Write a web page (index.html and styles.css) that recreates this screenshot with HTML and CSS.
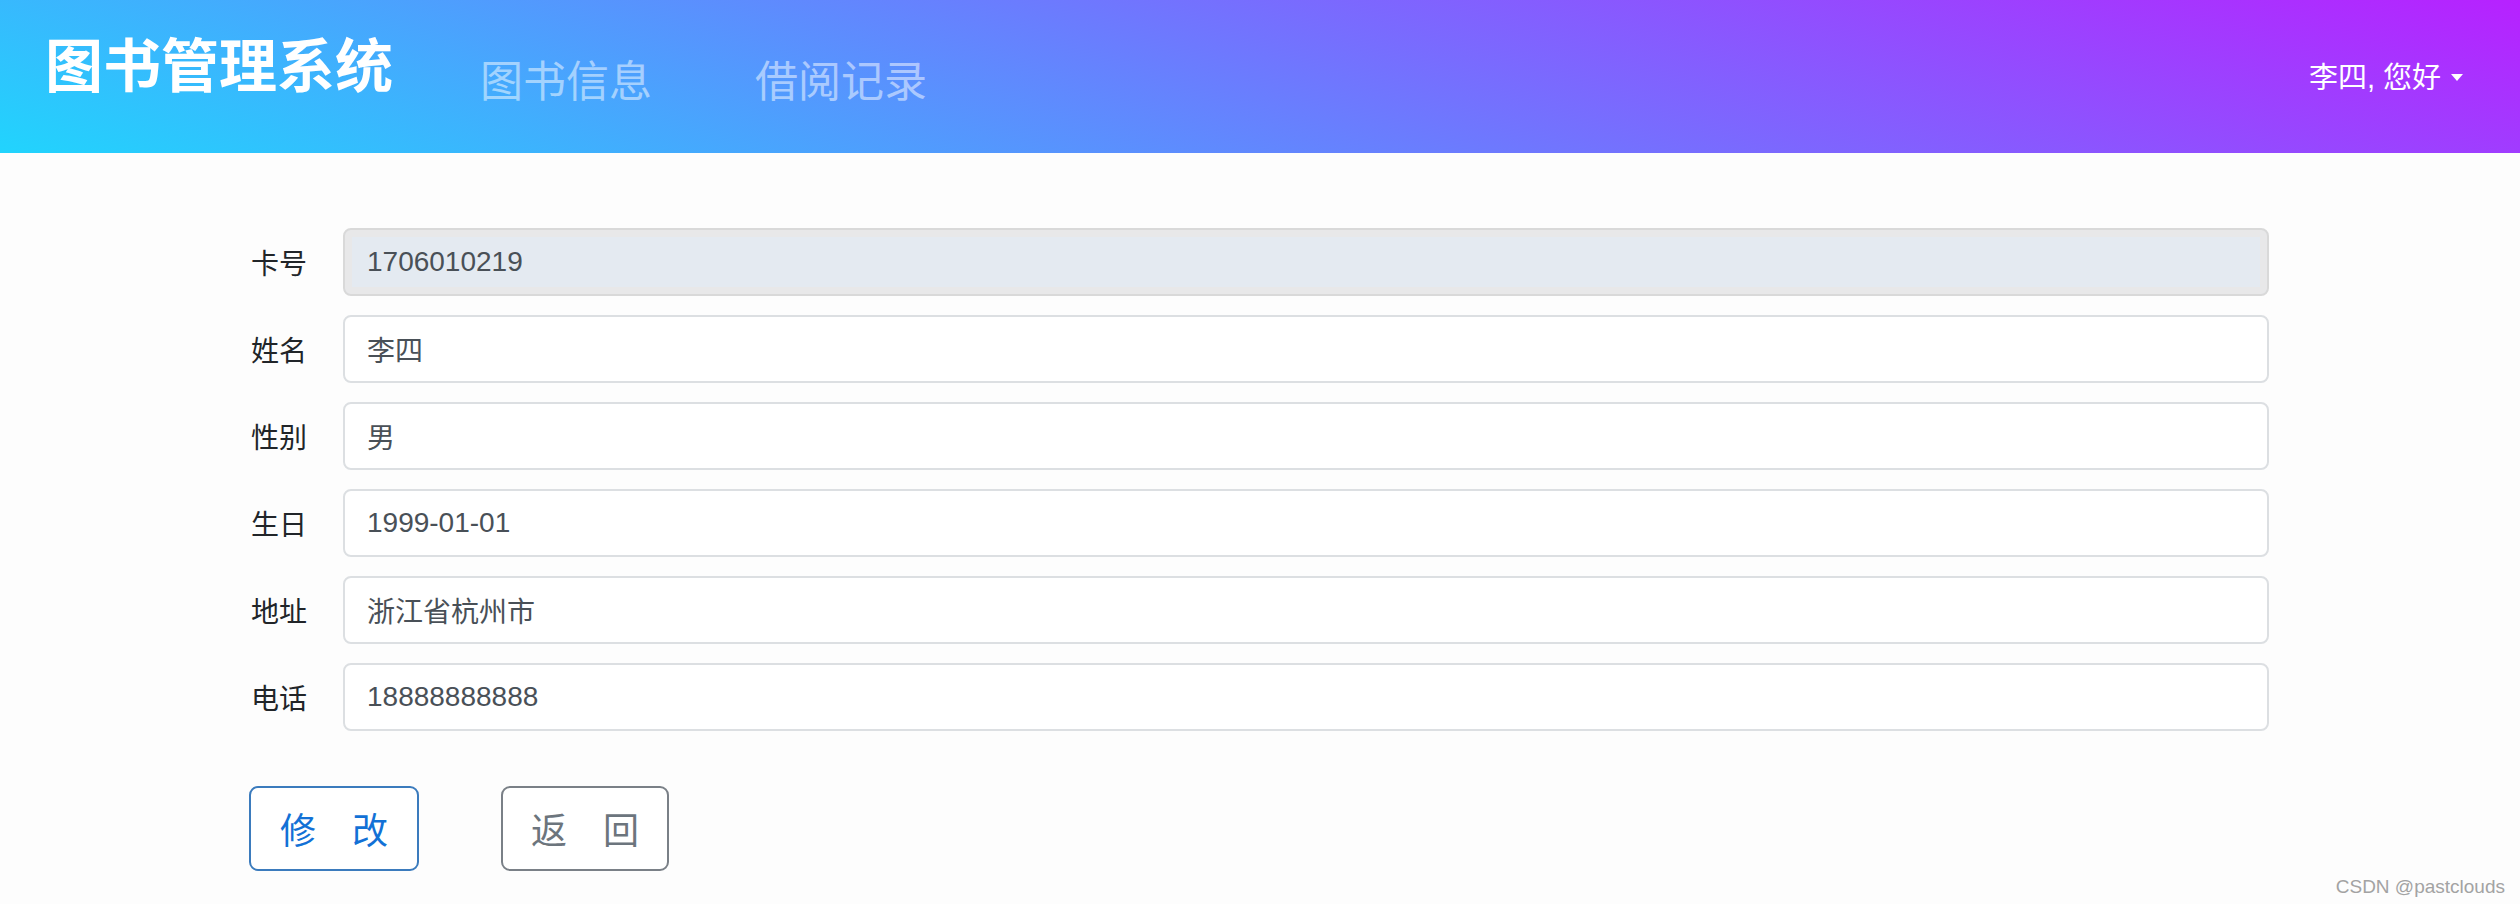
FILE: index.html
```html
<!DOCTYPE html>
<html lang="zh-CN">
<head>
    <meta charset="UTF-8">
    <title>图书管理系统</title>
    <link rel="stylesheet" href="styles.css">
</head>
<body>
    <div class="navbar">
        <a href="javascript:;" class="brand">图书管理系统</a>
        <ul class="nav">
            <li><a href="javascript:;">图书信息</a></li>
            <li><a href="javascript:;">借阅记录</a></li>
        </ul>
        <a href="javascript:;" class="user">李四, 您好<span class="caret"></span></a>
    </div>

    <div class="main">
        <form class="info">
            <div class="row">
                <label>卡号</label>
                <input type="text" class="readonly" value="1706010219" readonly>
            </div>
            <div class="row">
                <label>姓名</label>
                <input type="text" value="李四">
            </div>
            <div class="row">
                <label>性别</label>
                <input type="text" value="男">
            </div>
            <div class="row">
                <label>生日</label>
                <input type="text" value="1999-01-01">
            </div>
            <div class="row">
                <label>地址</label>
                <input type="text" value="浙江省杭州市">
            </div>
            <div class="row">
                <label>电话</label>
                <input type="text" value="18888888888">
            </div>

            <div class="btns">
                <a href="javascript:;" class="btn btn-edit">修　改</a>
                <a href="javascript:;" class="btn btn-back">返　回</a>
            </div>
        </form>
    </div>

    <div class="mark">CSDN @pastclouds</div>
</body>
</html>
```

FILE: styles.css
```css
* {
    margin: 0;
    padding: 0;
    box-sizing: border-box;
}
ul, ol {
    list-style: none;
}
a {
    text-decoration: none;
}
body {
    background: #fdfdfd;
    font-family: "Liberation Sans", "Noto Sans CJK SC", sans-serif;
    color: #212529;
    height: 904px;
    position: relative;
    overflow: hidden;
}

/* 顶部导航 */
.navbar {
    height: 153px;
    display: flex;
    align-items: center;
    padding: 0 57px 0 45px;
    background-image: linear-gradient(19deg, #21d4fd 0%, #b721ff 100%);
}
.brand {
    font-family: "Noto Sans CJK SC", sans-serif;
    font-size: 58px;
    font-weight: 700;
    line-height: 80px;
    color: #fff;
    margin-bottom: 30px;
}
.nav {
    display: flex;
    gap: 103px;
    margin-left: 87px;
}
.nav a {
    font-family: "Noto Sans CJK SC", sans-serif;
    font-size: 43px;
    line-height: 60px;
    color: rgba(255, 255, 255, .5);
    display: block;
    margin-top: 2px;
}
.user {
    margin-left: auto;
    font-size: 29px;
    line-height: 40px;
    color: #fff;
    display: flex;
    align-items: center;
    margin-top: 2px;
}
.caret {
    display: inline-block;
    margin-left: 10px;
    border-top: 7px solid #fff;
    border-left: 6px solid transparent;
    border-right: 6px solid transparent;
}

/* 表单 */
.info {
    width: 2018px;
    margin: 75px auto 0;
    display: flex;
    flex-direction: column;
    gap: 19px;
}
.row {
    display: flex;
    align-items: center;
}
.row label {
    width: 92px;
    font-family: "Noto Sans CJK SC", sans-serif;
    font-size: 28px;
    color: #212529;
}
.row input {
    flex: 1;
    height: 68px;
    padding: 0 22px;
    border: 2px solid #dcdfe2;
    border-radius: 8px;
    background: #fff;
    font-family: "Liberation Sans", "Noto Sans CJK SC", sans-serif;
    font-size: 28px;
    color: #495057;
    outline: none;
}
.row input.readonly {
    background: #e4eaf1;
    border-color: #d9d9d9;
    box-shadow: inset 0 4px 0 #e8e8e9, inset 0 0 0 7px #e8e8e9;
}

.btns {
    display: flex;
    gap: 82px;
    margin-top: 36px;
    margin-left: -2px;
}
.btn {
    display: block;
    height: 85px;
    padding: 0 29px;
    border: 2px solid;
    border-radius: 9px;
    font-family: "Noto Sans CJK SC", sans-serif;
    font-size: 36px;
    line-height: 81px;
    background: #fff;
}
.btn-edit {
    color: #1271d6;
    border-color: #3b7bbd;
}
.btn-back {
    padding: 0 28px;
    color: #6c757d;
    border-color: #7a8087;
}

/* 水印 */
.mark {
    position: absolute;
    right: 15px;
    bottom: 8px;
    font-size: 19px;
    line-height: 1;
    color: #a3a3a3;
}
```
